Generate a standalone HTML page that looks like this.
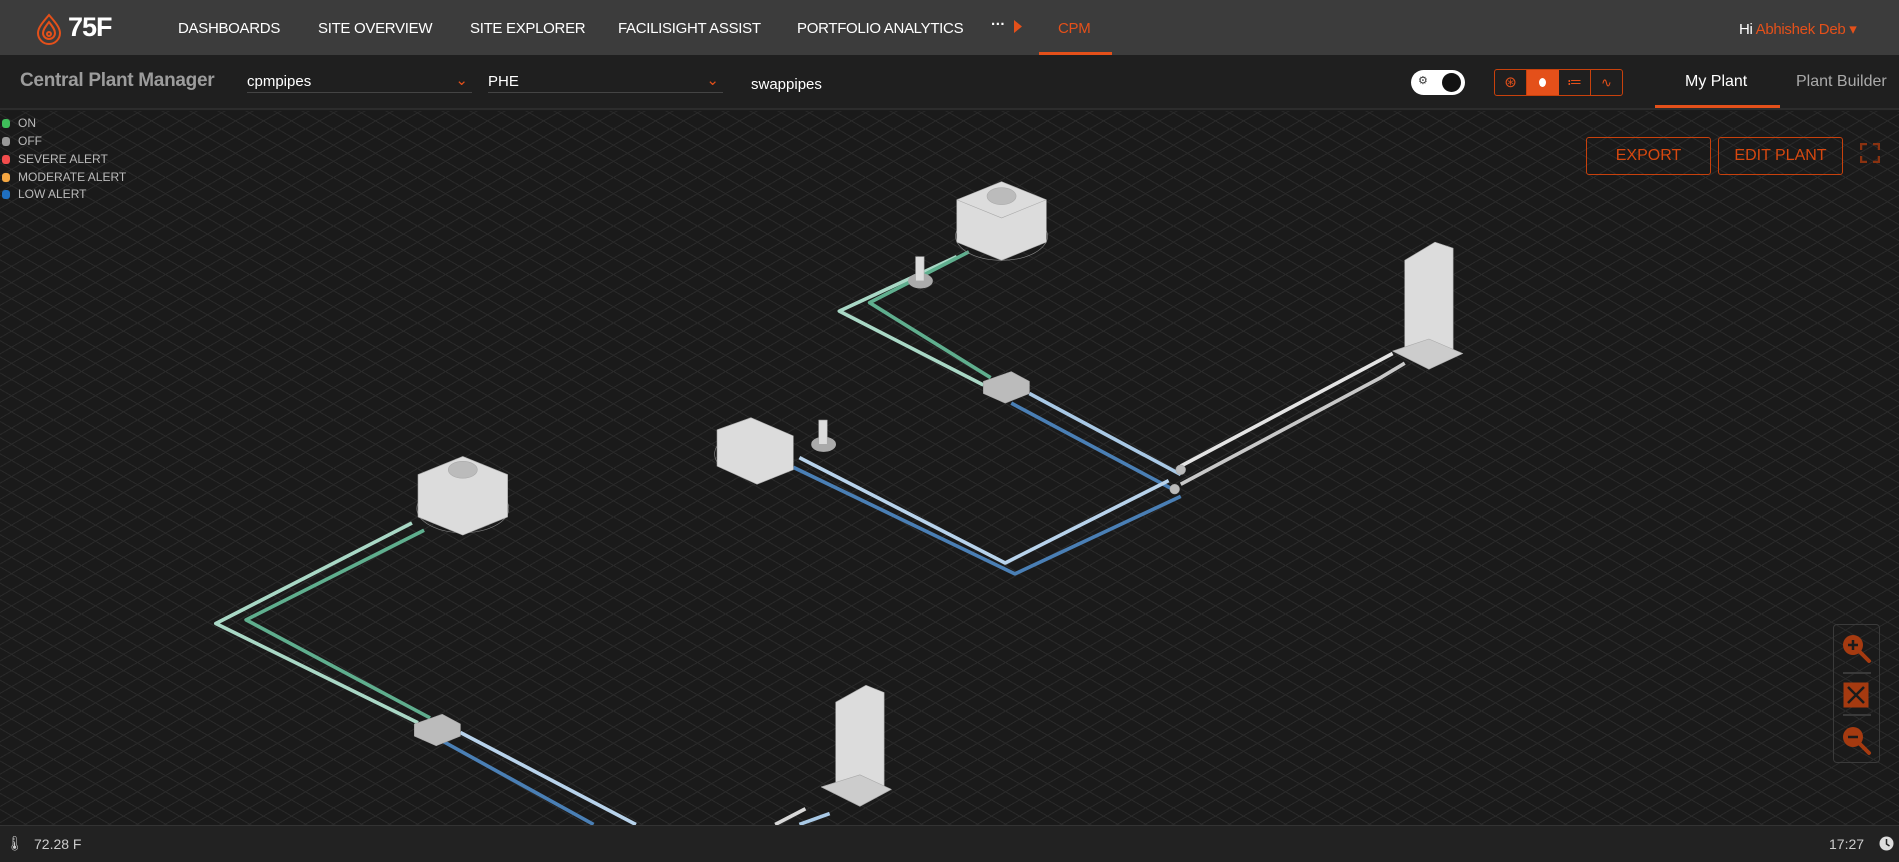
<!DOCTYPE html>
<html><head><meta charset="utf-8">
<style>
*{margin:0;padding:0;box-sizing:border-box}
body{width:1899px;height:862px;overflow:hidden;background:#1b1b1b;font-family:"Liberation Sans",sans-serif;position:relative}
.nav{position:absolute;left:0;top:0;width:1899px;height:55px;background:#3c3c3c}
.nav .it{position:absolute;top:20px;color:#fff;font-size:15px;letter-spacing:-0.3px}
.bar2{position:absolute;left:0;top:55px;width:1899px;height:55px;background:#1f1f1f;border-bottom:2px solid #2c2c2c}
.canvas{position:absolute;left:0;top:111px;width:1899px;height:714px;background-color:#1a1a1a;
background-image:repeating-linear-gradient(30deg,transparent 0 13px,#292929 13px 14px),repeating-linear-gradient(-30deg,transparent 0 13px,#292929 13px 14px)}
.foot{position:absolute;left:0;top:825px;width:1899px;height:37px;background:#222;border-top:1px solid #333}
.leg{position:absolute;left:2px;font-size:12px;color:#bbb}
.leg i{display:inline-block;width:8px;height:9px;border-radius:3px;margin-right:8px;vertical-align:-1px}
.btn{position:absolute;top:137px;height:38px;border:1px solid #c8410c;border-radius:3px;color:#d8480f;font-size:16px;text-align:center;line-height:36px}
</style></head><body>
<div class="nav">
 <svg style="position:absolute;left:34px;top:13px" width="30" height="32" viewBox="0 0 30 32"><g fill="none" stroke="#e4501a" stroke-width="2"><path d="M15 2 C8 10 4 15 4 20 a11 11 0 0 0 22 0 c0-5-4-10-11-18z"/><path d="M15 9 c-4 5-6 8-6 11 a6 6 0 0 0 12 0 c0-3-2-6-6-11z"/><circle cx="15" cy="21" r="2"/></g></svg>
 <div style="position:absolute;left:68px;top:12px;color:#fff;font-size:27px;font-weight:bold;letter-spacing:-1px">75F</div>
 <div class="it" style="left:178px">DASHBOARDS</div>
 <div class="it" style="left:318px">SITE OVERVIEW</div>
 <div class="it" style="left:470px">SITE EXPLORER</div>
 <div class="it" style="left:618px">FACILISIGHT ASSIST</div>
 <div class="it" style="left:797px">PORTFOLIO ANALYTICS</div>
 <div class="it" style="left:991px;top:16px;font-weight:bold">···</div>
 <svg style="position:absolute;left:1014px;top:20px" width="8" height="13"><path d="M0 0 L8 6.5 L0 13z" fill="#e4501a"/></svg>
 <div class="it" style="left:1058px;color:#e4501a">CPM</div>
 <div style="position:absolute;left:1039px;top:52px;width:73px;height:3px;background:#e4501a"></div>
 <div class="it" style="left:1739px">Hi <span style="color:#e4501a">Abhishek Deb ▾</span></div>
</div>
<div class="bar2">
 <div style="position:absolute;left:20px;top:15px;color:#9c9c9c;font-size:19px;font-weight:bold;letter-spacing:-0.3px">Central Plant Manager</div>
 <div style="position:absolute;left:247px;top:18px;width:225px;height:20px;border-bottom:1px solid #444;color:#fff;font-size:15px">cpmpipes<span style="position:absolute;right:4px;top:-2px;color:#e4501a">⌄</span></div>
 <div style="position:absolute;left:488px;top:18px;width:235px;height:20px;border-bottom:1px solid #444;color:#fff;font-size:15px">PHE<span style="position:absolute;right:4px;top:-2px;color:#e4501a">⌄</span></div>
 <div style="position:absolute;left:751px;top:21px;color:#fff;font-size:15px">swappipes</div>
 <div style="position:absolute;left:1411px;top:15px;width:54px;height:25px;background:#fff;border-radius:13px"><span style="position:absolute;left:7px;top:4px;font-size:11px;color:#333">⚙</span><span style="position:absolute;right:4px;top:3px;width:19px;height:19px;border-radius:50%;background:#111"></span></div>
 <div style="position:absolute;left:1494px;top:14px;width:129px;height:27px;border:1px solid #c8410c;border-radius:3px;display:flex">
  <div style="width:32px;border-right:1px solid #c8410c;color:#e4501a;text-align:center;font-size:15px;line-height:25px">⊛</div>
  <div style="width:32px;background:#e4501a;position:relative"><span style="position:absolute;left:12px;top:8px;width:7px;height:9px;border-radius:50%;background:#fff"></span></div>
  <div style="width:32px;border-right:1px solid #c8410c;color:#e4501a;text-align:center;font-size:15px;line-height:25px">≔</div>
  <div style="width:31px;color:#e4501a;text-align:center;font-size:13px;line-height:25px">∿</div>
 </div>
 <div style="position:absolute;left:1685px;top:18px;color:#fff;font-size:16px">My Plant</div>
 <div style="position:absolute;left:1655px;top:50px;width:125px;height:3px;background:#e4501a"></div>
 <div style="position:absolute;left:1796px;top:18px;color:#aaa;font-size:16px">Plant Builder</div>
</div>
<div class="canvas"></div>
<svg style="position:absolute;left:0;top:0" width="1899" height="862" viewBox="0 0 1568 712" fill="none" stroke-linejoin="round">
 <g stroke-width="3">
 <path d="M790 212 L693 257 L812 318" stroke="#a9d8c6"/>
 <path d="M800 208 L718 250 L818 312" stroke="#5fae8e"/>
 <path d="M850 325 L975 392" stroke="#a9c9e6"/>
 <path d="M835 333 L970 405" stroke="#4a7fb5"/>
 <path d="M660 378 L830 465 L965 397" stroke="#b8d3ec"/>
 <path d="M655 386 L838 474 L975 410" stroke="#4a7fb5"/>
 <path d="M975 385 L1150 292" stroke="#e4e4e4"/>
 <path d="M975 400 L1140 312 L1160 300" stroke="#c8c8c8"/>
 <path d="M340 432 L178 515 L345 597" stroke="#a9d8c6"/>
 <path d="M350 438 L203 512 L355 593" stroke="#5fae8e"/>
 <path d="M380 605 L525 681" stroke="#b8d3ec"/>
 <path d="M365 612 L490 681" stroke="#4a7fb5"/>
 <path d="M665 668 L640 681" stroke="#d8d8d8"/>
 <path d="M685 672 L660 681" stroke="#a9c9e6"/>
 </g>
 <g fill="#dcdcdc" stroke="#aaa" stroke-width="0.5">
  <ellipse cx="827" cy="195" rx="38" ry="20" fill="none" stroke="#888"/>
  <path d="M790 165 L827 150 L864 165 L864 200 L827 215 L790 200z"/>
  <path d="M790 165 L827 180 L864 165" fill="none"/>
  <ellipse cx="827" cy="162" rx="12" ry="7" fill="#bbb"/>
  <ellipse cx="382" cy="420" rx="38" ry="20" fill="none" stroke="#888"/>
  <path d="M345 392 L382 377 L419 392 L419 427 L382 442 L345 427z"/>
  <ellipse cx="382" cy="388" rx="12" ry="7" fill="#bbb"/>
  <ellipse cx="620" cy="375" rx="30" ry="18" fill="none" stroke="#888"/>
  <path d="M592 355 L620 345 L655 360 L655 388 L625 400 L592 385z"/>
  <ellipse cx="760" cy="232" rx="10" ry="6" fill="#aaa"/><rect x="756" y="212" width="7" height="20"/>
  <ellipse cx="680" cy="367" rx="10" ry="6" fill="#aaa"/><rect x="676" y="347" width="7" height="20"/>
  <path d="M812 315 L835 307 L850 315 L850 325 L830 333 L812 325z" fill="#bbb"/>
  <path d="M342 598 L365 590 L380 598 L380 608 L360 616 L342 608z" fill="#bbb"/>
  <path d="M1160 215 L1185 200 L1200 205 L1200 290 L1180 300 L1160 290z"/>
  <path d="M1150 290 L1180 280 L1208 292 L1180 305z" fill="#ccc"/>
  <path d="M690 580 L715 566 L730 572 L730 650 L710 660 L690 650z"/>
  <path d="M678 650 L710 640 L736 652 L710 666z" fill="#ccc"/>
  <circle cx="975" cy="388" r="4" fill="#bbb"/><circle cx="970" cy="404" r="4" fill="#bbb"/>
 </g>
</svg>
<div class="leg" style="top:116px"><i style="background:#3fbf5a"></i>ON</div>
<div class="leg" style="top:134px"><i style="background:#999"></i>OFF</div>
<div class="leg" style="top:152px"><i style="background:#f24c4c"></i>SEVERE ALERT</div>
<div class="leg" style="top:170px"><i style="background:#f5a742"></i>MODERATE ALERT</div>
<div class="leg" style="top:187px"><i style="background:#1f6fc0"></i>LOW ALERT</div>
<div class="btn" style="left:1586px;width:125px">EXPORT</div>
<div class="btn" style="left:1718px;width:125px">EDIT PLANT</div>
<svg style="position:absolute;left:1860px;top:143px" width="20" height="20" fill="none" stroke="#8a3210" stroke-width="2.5"><path d="M1 7V1h6M13 1h6v6M19 13v6h-6M7 19H1v-6"/></svg>
<div style="position:absolute;left:1833px;top:624px;width:47px;height:139px;border:1px solid #3a3a3a;border-radius:4px">
 <svg width="47" height="139" viewBox="0 0 47 139"><g fill="#a53a10" stroke="#a53a10"><circle cx="19" cy="20" r="10" stroke="none"/><path d="M25 26 L35 36" stroke-width="4" stroke-linecap="round"/><path d="M14 20h10M19 15v10" stroke="#1b1b1b" stroke-width="2.5"/>
 <path d="M9 48h28M9 90h28" stroke="#3a3a3a" stroke-width="2"/>
 <rect x="10" y="58" width="24" height="24" stroke-width="1"/><path d="M14 62l16 16M30 62L14 78" stroke="#1b1b1b" stroke-width="2.5"/>
 <circle cx="19" cy="112" r="10" stroke="none"/><path d="M25 118 L35 128" stroke-width="4" stroke-linecap="round"/><path d="M14 112h10" stroke="#1b1b1b" stroke-width="2.5"/></g></svg>
</div>
<div class="foot">
 <span style="position:absolute;left:6px;top:9px;color:#ccc;font-size:14px">🌡︎</span>
 <span style="position:absolute;left:34px;top:10px;color:#ccc;font-size:14px">72.28 F</span>
 <span style="position:absolute;left:1829px;top:10px;color:#ccc;font-size:14px">17:27</span>
 <svg style="position:absolute;left:1879px;top:10px" width="15" height="15"><circle cx="7.5" cy="7.5" r="7" fill="#ddd"/><path d="M7.5 3v5l3 2" stroke="#222" stroke-width="1.5" fill="none"/></svg>
</div>
</body></html>
